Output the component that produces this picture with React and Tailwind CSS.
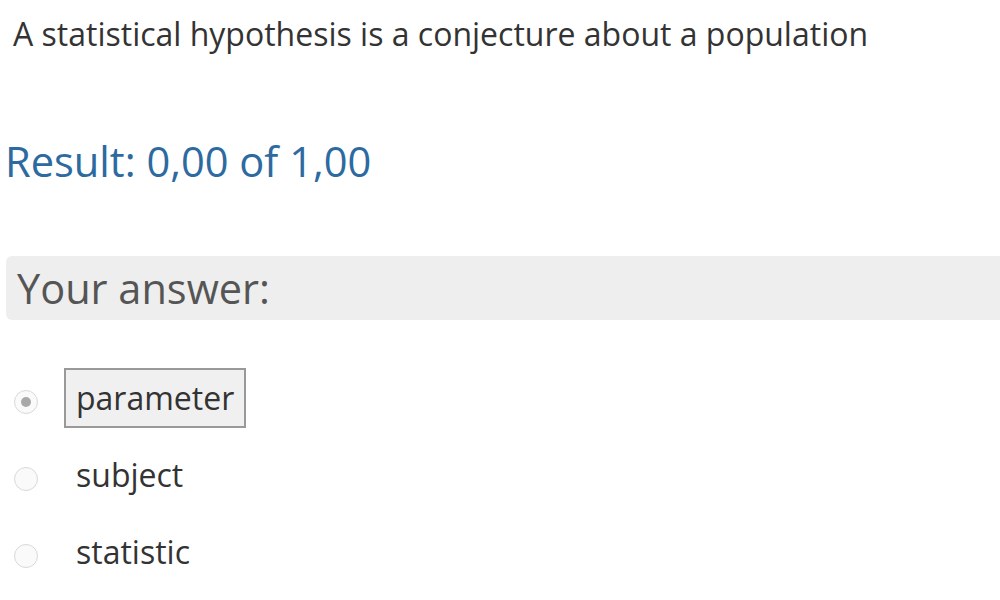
import React from 'react';

const Radio = ({ checked }) => (
  <span className="mt-[8px] flex h-[24px] w-[24px] shrink-0 items-center justify-center rounded-full border border-[#d9d9d9] bg-[#fafafa]">
    {checked && <span className="h-[10px] w-[10px] rounded-full bg-[#a9a9a9]" />}
  </span>
);

export default function App() {
  const options = [
    { label: 'parameter', checked: true },
    { label: 'subject' },
    { label: 'statistic' },
  ];
  return (
    <div className="h-[600px] w-[1000px] overflow-hidden bg-white" style={{ fontFamily: '"Open Sans", sans-serif' }}>
      <p className="pl-[13px] pt-[14px] text-[32px] leading-[40px] text-[#333]">
        A statistical hypothesis is a conjecture about a population
      </p>
      <h2 className="mt-[84px] pl-[5px] text-[41.6px] leading-[46px] text-[#2d6a9f]">Result: 0,00 of 1,00</h2>
      <div className="ml-[6px] mt-[72px] flex h-[64px] items-center rounded-l-[6px] bg-[#eeeeee] pl-[11px]">
        <span className="text-[41.5px] leading-[48px] text-[#555]">Your answer:</span>
      </div>
      <div className="mt-[48px] flex flex-col gap-[17px] pl-[14px]">
        {options.map(o => (
          <div key={o.label} className="flex h-[60px] items-center gap-[26px]">
            <Radio checked={o.checked} />
            <span
              className={
                o.checked
                  ? 'border-2 border-[#999] bg-[#f0f0f0] px-[10px] py-[8px] text-[32px] leading-[40px] text-[#333]'
                  : 'border-2 border-transparent px-[10px] py-[8px] text-[32px] leading-[40px] text-[#333]'
              }
            >
              {o.label}
            </span>
          </div>
        ))}
      </div>
    </div>
  );
}
